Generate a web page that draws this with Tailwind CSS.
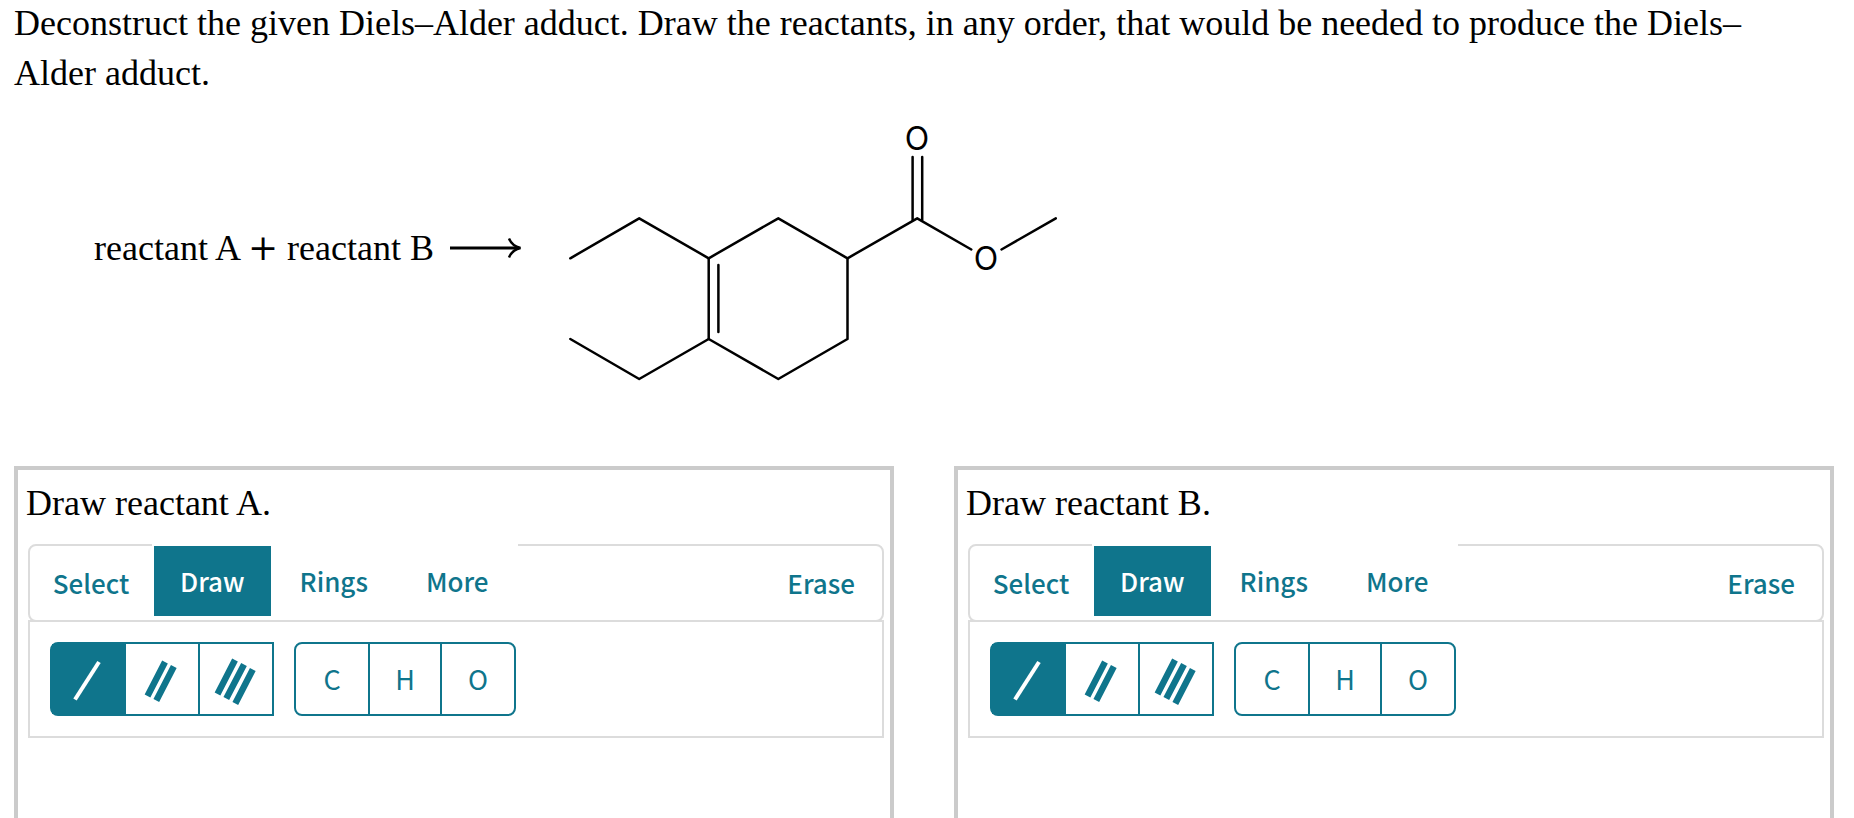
<!DOCTYPE html>
<html lang="en">
<head>
  <meta charset="UTF-8" />
  <meta name="viewport" content="width=device-width, initial-scale=1" />
  <title>Diels–Alder Deconstruction</title>
  <script src="https://cdn.jsdelivr.net/npm/@tailwindcss/browser@4"></script>
</head>
<body class="bg-white text-black font-['Liberation_Serif',serif] text-[36px] leading-[50px]">
  <main class="h-screen overflow-hidden flex flex-col pl-[14px] pr-5">

    <!-- Question -->
    <p class="-mt-0.5 pr-10">Deconstruct the given Diels–Alder adduct. Draw the reactants, in any order, that would be needed to produce the Diels–<wbr />Alder adduct.</p>

    <!-- Reaction scheme -->
    <section class="flex items-start pt-3 pl-20">
      <div class="flex items-center gap-4 pt-[113px]">
        <span class="whitespace-nowrap">reactant A <span class="font-['DejaVu_Serif',serif] leading-none">+</span> reactant B</span>
        <svg class="w-[72px] h-6" viewBox="0 0 72 24" fill="none" stroke="#000" aria-label="yields">
          <path d="M0 12h69" stroke-width="3.200" />
          <path d="M59 2.500c2 5 5.500 8 11.500 9.500c-6 1.500-9.500 4.500-11.500 9.500" stroke-width="2.400" />
        </svg>
      </div>
      <svg class="w-[510px] h-[280px] ml-[38px]" viewBox="0 0 510 280" fill="none" stroke="#000" stroke-width="2.500" stroke-linecap="round" stroke-linejoin="round" role="img" aria-label="Diels–Alder adduct">
        <!-- ethyl groups -->
        <path d="M10.300 148.300L79.200 108.300L148.700 148.300" />
        <path d="M10.300 229L79.200 269L148.700 229" />
        <!-- ring -->
        <path d="M148.700 148.300L218.300 108.300L287.500 148.300V229L218.300 269L148.700 229Z" />
        <path d="M158.400 155V222" />
        <!-- methyl ester -->
        <path d="M287.500 148.300L357.200 108.300L411.300 139.500" />
        <path d="M352.600 47V110M362.200 47V110" />
        <path d="M441.500 139.500L495.800 108.300" />
        <g class="font-['Inter',sans-serif] text-[32px]" fill="#000" stroke="none" text-anchor="middle">
          <text x="357" y="40">O</text>
          <text x="426" y="160">O</text>
        </g>
      </svg>
    </section>

    <!-- Drawing panels -->
    <div class="flex-1 grid grid-cols-2 gap-[60px] pt-[76px]">

      <section class="border-4 border-b-0 border-[#cbcbcb] pt-2">
        <h2 class="pl-2">Draw reactant A.</h2>
        <div class="ml-2.5 mr-1.5 mt-4 font-['Noto_Sans_CJK_SC',sans-serif] text-[27px] leading-8 text-[#0f758c]">
          <div class="flex h-[78px] border-2 border-[#dcdcdc] rounded-lg text-[26px] font-medium">
            <button type="button" class="w-[122px]">Select</button>
            <div class="flex h-[72px] -mt-0.5 pl-0.5 border-t-2 border-white">
              <button type="button" class="px-[26px] bg-[#0f758c] text-white">Draw</button>
              <button type="button" class="px-[29px]">Rings</button>
              <button type="button" class="px-[29px]">More</button>
            </div>
            <button type="button" class="ml-auto px-[27px]">Erase</button>
          </div>
          <div class="flex gap-5 -mt-0.5 px-5 py-5 border-2 border-[#dcdcdc]">
            <div class="flex h-[74px] border-2 border-[#0f758c] rounded-l-lg">
              <button type="button" aria-label="Single bond" class="w-[74px] flex items-center justify-center bg-[#0f758c]">
                <svg class="size-14" viewBox="0 0 56 56" stroke="#fff" stroke-width="4"><path d="M14 48.500L38 11" /></svg>
              </button>
              <button type="button" aria-label="Double bond" class="w-[74px] flex items-center justify-center border-r-2 border-[#0f758c]">
                <svg class="size-14" viewBox="0 0 56 56" stroke="#0f758c" stroke-width="6.400"><path d="M13.500 45L31 11M22.300 49.500L39.800 15.500" /></svg>
              </button>
              <button type="button" aria-label="Triple bond" class="w-[72px] flex items-center justify-center">
                <svg class="size-14" viewBox="0 0 56 56" stroke="#0f758c" stroke-width="6.400"><path d="M9.500 43L27 9M18.300 47.500L36 13.500M27.300 52.500L44.800 18.500" /></svg>
              </button>
            </div>
            <div class="flex h-[74px] border-2 border-[#0f758c] rounded-lg">
              <button type="button" class="w-[74px] border-r-2 border-[#0f758c]">C</button>
              <button type="button" class="w-[72px] border-r-2 border-[#0f758c]">H</button>
              <button type="button" class="w-[72px]">O</button>
            </div>
          </div>
        </div>
      </section>

      <section class="border-4 border-b-0 border-[#cbcbcb] pt-2">
        <h2 class="pl-2">Draw reactant B.</h2>
        <div class="ml-2.5 mr-1.5 mt-4 font-['Noto_Sans_CJK_SC',sans-serif] text-[27px] leading-8 text-[#0f758c]">
          <div class="flex h-[78px] border-2 border-[#dcdcdc] rounded-lg text-[26px] font-medium">
            <button type="button" class="w-[122px]">Select</button>
            <div class="flex h-[72px] -mt-0.5 pl-0.5 border-t-2 border-white">
              <button type="button" class="px-[26px] bg-[#0f758c] text-white">Draw</button>
              <button type="button" class="px-[29px]">Rings</button>
              <button type="button" class="px-[29px]">More</button>
            </div>
            <button type="button" class="ml-auto px-[27px]">Erase</button>
          </div>
          <div class="flex gap-5 -mt-0.5 px-5 py-5 border-2 border-[#dcdcdc]">
            <div class="flex h-[74px] border-2 border-[#0f758c] rounded-l-lg">
              <button type="button" aria-label="Single bond" class="w-[74px] flex items-center justify-center bg-[#0f758c]">
                <svg class="size-14" viewBox="0 0 56 56" stroke="#fff" stroke-width="4"><path d="M14 48.500L38 11" /></svg>
              </button>
              <button type="button" aria-label="Double bond" class="w-[74px] flex items-center justify-center border-r-2 border-[#0f758c]">
                <svg class="size-14" viewBox="0 0 56 56" stroke="#0f758c" stroke-width="6.400"><path d="M13.500 45L31 11M22.300 49.500L39.800 15.500" /></svg>
              </button>
              <button type="button" aria-label="Triple bond" class="w-[72px] flex items-center justify-center">
                <svg class="size-14" viewBox="0 0 56 56" stroke="#0f758c" stroke-width="6.400"><path d="M9.500 43L27 9M18.300 47.500L36 13.500M27.300 52.500L44.800 18.500" /></svg>
              </button>
            </div>
            <div class="flex h-[74px] border-2 border-[#0f758c] rounded-lg">
              <button type="button" class="w-[74px] border-r-2 border-[#0f758c]">C</button>
              <button type="button" class="w-[72px] border-r-2 border-[#0f758c]">H</button>
              <button type="button" class="w-[72px]">O</button>
            </div>
          </div>
        </div>
      </section>

    </div>
  </main>
</body>
</html>
